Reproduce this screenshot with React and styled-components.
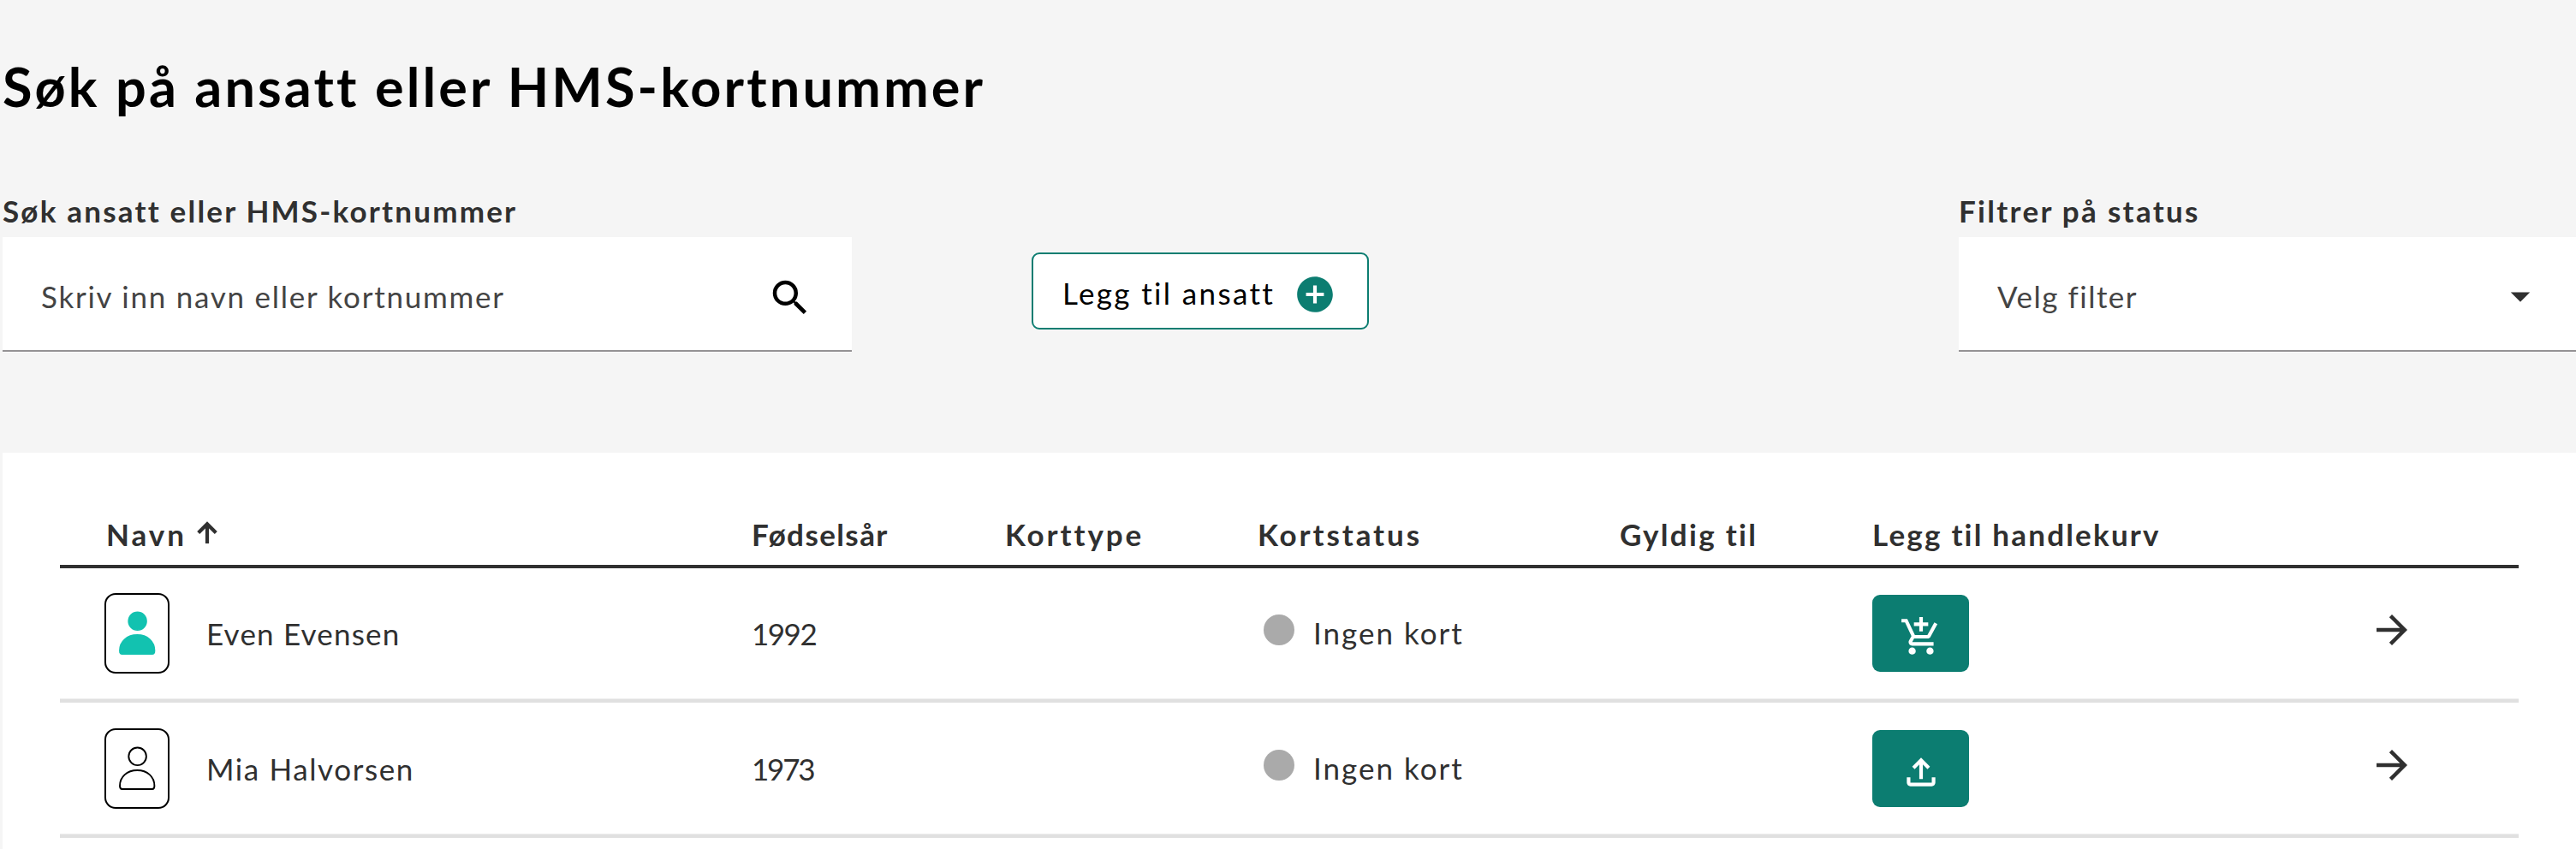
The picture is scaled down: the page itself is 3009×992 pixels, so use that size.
import React from "react";
import styled, { createGlobalStyle } from "styled-components";
import {
  MdAddCircle,
  MdArrowDropDown,
  MdArrowForward,
  MdOutlineAddShoppingCart,
  MdOutlineFileUpload,
  MdSearch,
} from "react-icons/md";

const GlobalStyle = createGlobalStyle`
  * {
    box-sizing: border-box;
  }
  body {
    margin: 0;
    background-color: #f5f5f5;
    font-family: Lato, "Open Sans", sans-serif;
    font-variant-ligatures: none;
    color: #303030;
  }
`;
const Page = styled.main`
  display: flex;
  flex-direction: column;
  width: 100%;
  height: 992px;
  padding: 64px 0 0 3px;
  overflow: hidden;
`;
const Title = styled.h1`
  margin: 0 0 86px;
  font-size: 63px;
  font-weight: 700;
  line-height: 74px;
  letter-spacing: 3.1px;
  color: #000;
`;
const Text = styled.span`
  font-size: 35px;
  line-height: 44px;
  white-space: nowrap;
  letter-spacing: ${(props) => props.$spacing || 1.5}px;
`;
const BoldText = styled(Text)`
  font-weight: 700;
`;
const Toolbar = styled.div`
  display: flex;
  align-items: flex-start;
  margin-bottom: 118px;
`;
const Field = styled.label`
  display: flex;
  flex-direction: column;
  gap: 9px;
  ${(props) => (props.$grow ? "flex: 1;" : "width: 992px;")}
`;
const InputBox = styled.div`
  display: flex;
  align-items: center;
  justify-content: space-between;
  height: 134px;
  padding: 0 ${(props) => props.$right}px 0 45px;
  background-color: #fff;
  border-bottom: 2px solid #949294;
  box-shadow: 0 1px 0 #fff;
`;
const Placeholder = styled(Text)`
  padding-top: 5px;
  color: #444;
`;
const SearchIcon = styled(MdSearch)`
  margin-top: 10px;
  color: #000;
`;
const DropDownIcon = styled(MdArrowDropDown)`
  margin-top: 5px;
`;
const AddButton = styled.button`
  display: flex;
  align-items: center;
  justify-content: space-between;
  width: 394px;
  height: 90px;
  margin: 71px 689px 0 210px;
  padding: 8px 36px 0 34px;
  border: 2px solid #0c7d71;
  border-radius: 9px;
  background-color: #fff;
  color: #000;
  font-family: inherit;
`;
const AddLabel = styled(Text)`
  margin-top: -4px;
`;
const AddIcon = styled(MdAddCircle)`
  color: #0c7d71;
  flex: none;
`;
const Card = styled.section`
  flex: 1;
  padding: 53px 67px 0;
  background-color: #fff;
`;
const Table = styled.div`
  width: 2872px;
`;
const Row = styled.div`
  display: grid;
  grid-template-columns: 808px 296px 295px 423px 295px 580px 175px;
  align-items: center;
`;
const HeaderRow = styled(Row)`
  height: 82px;
  padding-top: 6px;
  border-bottom: 4px solid #303030;
`;
const BodyRow = styled(Row)`
  padding: 30px 0;
  border-bottom: 4px solid #e0e0e0;
  box-shadow: inset 0 -1px 0 #ededed;
  ${(props) => props.$first && "padding-top: 29px;"}
`;
const NameHeader = styled.div`
  display: flex;
  align-items: center;
  gap: 12px;
  padding-left: 54px;
`;
const SortIcon = styled.svg`
  margin-top: -4px;
`;
const NameCell = styled.div`
  display: flex;
  align-items: center;
  gap: 43px;
  padding-left: 52px;
`;
const PersonCard = styled.div`
  width: 76px;
  height: 94px;
  border: 2px solid #000;
  border-radius: 13px;
`;
const StatusCell = styled.div`
  display: flex;
  align-items: center;
  gap: 22px;
  padding-left: 7px;
`;
const StatusDot = styled.span`
  width: 36px;
  height: 36px;
  margin-bottom: 8px;
  border-radius: 50%;
  background-color: #aaa;
`;
const StatusText = styled(Text)`
  margin-top: -3px;
`;
const ActionButton = styled.button`
  display: flex;
  align-items: center;
  justify-content: center;
  width: 113px;
  height: 90px;
  padding: 8px 0 0;
  border: none;
  border-radius: 9px;
  background-color: #0c7d71;
  color: #fff;
`;
const OpenIcon = styled(MdArrowForward)`
  margin-bottom: 9px;
`;

const headers = [
  { label: "Fødselsår", spacing: 1.4 },
  { label: "Korttype", spacing: 2.9 },
  { label: "Kortstatus", spacing: 2.9 },
  { label: "Gyldig til", spacing: 2.3 },
  { label: "Legg til handlekurv", spacing: 2.2 },
];

const employees = [
  {
    name: "Even Evensen",
    spacing: 1.2,
    year: "1992",
    yearSpacing: -1.5,
    status: "Ingen kort",
    hasPhoto: true,
    action: <MdOutlineAddShoppingCart size={50} />,
  },
  {
    name: "Mia Halvorsen",
    spacing: 1.6,
    year: "1973",
    yearSpacing: -2.2,
    status: "Ingen kort",
    hasPhoto: false,
    action: <MdOutlineFileUpload size={50} />,
  },
];

const Person = ({ filled }) => (
  <PersonCard>
    <svg
      width="72"
      height="90"
      viewBox="0 0 72 90"
      fill={filled ? "#12c2b0" : "none"}
      stroke={filled ? "#12c2b0" : "#000"}
      strokeWidth="1.9"
    >
      <circle cx="36.6" cy="30.8" r="10.3" />
      <path d="M18.5 69C16.8 69 16 67.5 16 65.2C16 54.5 24.5 47 36.3 47S56.4 54.5 56.4 65.2C56.4 67.5 55.6 69 54 69Z" />
    </svg>
  </PersonCard>
);

const App = () => {
  return (
    <>
      <GlobalStyle />
      <Page>
        <Title>Søk på ansatt eller HMS-kortnummer</Title>
        <Toolbar>
          <Field>
            <BoldText $spacing={2.2}>Søk ansatt eller HMS-kortnummer</BoldText>
            <InputBox $right={45}>
              <Placeholder $spacing={1.75}>
                Skriv inn navn eller kortnummer
              </Placeholder>
              <SearchIcon size={54} />
            </InputBox>
          </Field>
          <AddButton>
            <AddLabel $spacing={2.35}>Legg til ansatt</AddLabel>
            <AddIcon size={50} />
          </AddButton>
          <Field $grow>
            <BoldText $spacing={2.3}>Filtrer på status</BoldText>
            <InputBox $right={38}>
              <Placeholder $spacing={1.5}>Velg filter</Placeholder>
              <DropDownIcon size={54} />
            </InputBox>
          </Field>
        </Toolbar>
        <Card>
          <Table>
            <HeaderRow>
              <NameHeader>
                <BoldText $spacing={3}>Navn</BoldText>
                <SortIcon width="24" height="26" viewBox="0 0 24 26">
                  <path
                    d="M12 26V4M1.7 13.6L12 3.2L22.3 13.6"
                    fill="none"
                    stroke="#303030"
                    strokeWidth="4.2"
                  />
                </SortIcon>
              </NameHeader>
              {headers.map((header) => (
                <BoldText key={header.label} $spacing={header.spacing}>
                  {header.label}
                </BoldText>
              ))}
            </HeaderRow>
            {employees.map((employee, index) => (
              <BodyRow key={employee.name} $first={index === 0}>
                <NameCell>
                  <Person filled={employee.hasPhoto} />
                  <Text $spacing={employee.spacing}>{employee.name}</Text>
                </NameCell>
                <Text $spacing={employee.yearSpacing}>{employee.year}</Text>
                <span />
                <StatusCell>
                  <StatusDot />
                  <StatusText $spacing={2}>{employee.status}</StatusText>
                </StatusCell>
                <span />
                <ActionButton>{employee.action}</ActionButton>
                <OpenIcon size={54} />
              </BodyRow>
            ))}
          </Table>
        </Card>
      </Page>
    </>
  );
};

export default App;
